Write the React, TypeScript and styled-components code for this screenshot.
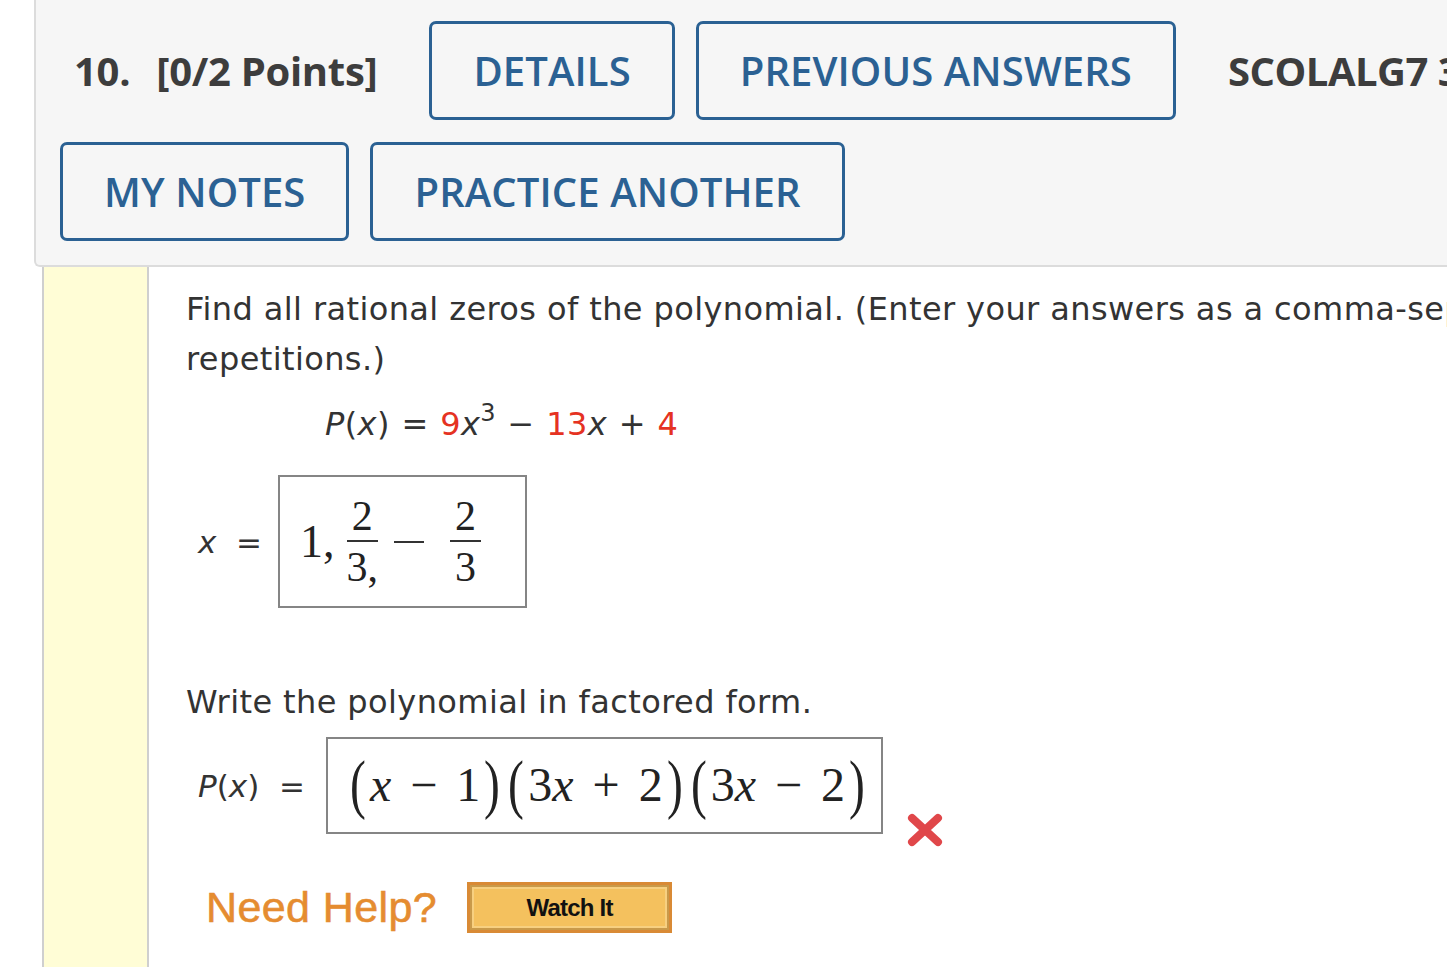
import styled, { createGlobalStyle } from "styled-components"

const GlobalStyle = createGlobalStyle`
  html, body {
    margin: 0;
    padding: 0;
    background: #fff;
  }
  body {
    width: 1447px;
    height: 967px;
    overflow: hidden;
  }
`

const Page = styled.div`
  width: 1447px;
  height: 967px;
  overflow: hidden;
  font-family: "DejaVu Sans", Verdana, sans-serif;
  color: #333;
`

const Header = styled.div`
  margin-left: 34px;
  width: 1500px;
  background: #f6f6f6;
  border-left: 2px solid #dcdcdc;
  border-bottom: 2px solid #dcdcdc;
  border-bottom-left-radius: 6px;
  padding: 21px 0 24px 24px;
  display: flex;
  flex-direction: column;
  gap: 22px;
  font-family: "Open Sans", sans-serif;
`

const HeaderRow = styled.div`
  display: flex;
  align-items: center;
  white-space: nowrap;
`

const Title = styled.div`
  font-size: 40px;
  font-weight: 700;
  color: #3d3d3d;
  letter-spacing: -0.3px;
  display: flex;
  gap: 26px;
  margin-left: 14px;
  margin-right: 52px;
`

const OutlineButton = styled.button<{ $gap?: number }>`
  height: 99px;
  box-sizing: border-box;
  padding: 0 41px;
  margin-right: ${p => p.$gap ?? 21}px;
  background: transparent;
  border: 3px solid #2b6193;
  border-radius: 7px;
  color: #2b6193;
  font-family: "Open Sans", sans-serif;
  font-weight: 600;
  font-size: 40px;
  letter-spacing: 0.1px;
`

const Code = styled.div`
  font-size: 40px;
  font-weight: 700;
  color: #3d3d3d;
  letter-spacing: -0.5px;
`

const Body = styled.div`
  display: flex;
  height: 700px;
`

const Gutter = styled.div`
  flex-shrink: 0;
  margin-left: 42px;
  width: 103px;
  background: #fffdd6;
  border-left: 2px solid #cfcfcf;
  border-right: 2px solid #cfcfcf;
`

const Content = styled.div`
  padding: 17px 0 0 37px;
  white-space: nowrap;
`

const Prompt = styled.p<{ $top?: number }>`
  margin: ${p => p.$top ?? 0}px 0 0;
  font-size: 32px;
  line-height: 50px;
  letter-spacing: 0.4px;
  color: #333;
`

const Formula = styled.div`
  margin: 20px 0 0 139px;
  font-size: 32px;
  line-height: 40px;
  letter-spacing: 0.4px;
  color: #333;
  word-spacing: 1px;
`

const Red = styled.span`
  color: #e53222;
`

const Sup = styled.sup`
  font-size: 24px;
  vertical-align: 14px;
  line-height: 0;
`

const AnswerRow = styled.div<{ $indent: number; $top: number }>`
  display: flex;
  align-items: center;
  margin: ${p => p.$top}px 0 0 ${p => p.$indent}px;
`

const Label = styled.span<{ $gap: number }>`
  font-size: 31px;
  color: #333;
  margin-right: ${p => p.$gap}px;
`

const MathBox = styled.div<{ $w: number; $h: number; $pad: number }>`
  box-sizing: border-box;
  width: ${p => p.$w}px;
  height: ${p => p.$h}px;
  border: 2px solid #858585;
  display: flex;
  align-items: center;
  padding-left: ${p => p.$pad}px;
  font-family: "Liberation Serif", "Times New Roman", serif;
  color: #222;
`

const MathText = styled.span<{ $size: number }>`
  font-size: ${p => p.$size}px;
  line-height: 1;
`

const Frac = styled.span<{ $gap: number }>`
  display: inline-flex;
  flex-direction: column;
  align-items: center;
  margin-left: ${p => p.$gap}px;
  font-size: 42px;
  line-height: 1;
`

const Num = styled.span`
  padding: 0 5px 3px;
  border-bottom: 2px solid #333;
`

const Den = styled.span`
  padding-top: 4px;
`

const Minus = styled.span`
  width: 30px;
  height: 2px;
  margin-left: 16px;
  background: #333;
`

const Paren = styled.span`
  display: inline-block;
  font-size: 66px;
  line-height: 1;
  transform: scaleX(0.72);
  margin: -4px 1px 0;
  vertical-align: -5px;
`

const Op = styled.span`
  margin: 0 19px;
`

const WrongMark = styled.span`
  align-self: flex-end;
  margin: 0 0 -13px 24px;
  display: flex;
`

const Help = styled.div`
  display: flex;
  align-items: center;
  margin: 48px 0 0 20px;
  gap: 30px;
`

const HelpText = styled.span`
  font-family: "Liberation Sans", Arial, sans-serif;
  font-size: 43px;
  letter-spacing: 0.4px;
  color: #e58c30;
  -webkit-text-stroke: 0.6px #e58c30;
`

const WatchButton = styled.button`
  box-sizing: border-box;
  width: 205px;
  height: 51px;
  background: #f4c15e;
  border: 3px solid #d98a35;
  box-shadow: inset 0 0 0 2px #c99a4a, inset 0 0 0 4px #f7d080;
  font-family: "Liberation Sans", Arial, sans-serif;
  font-weight: 700;
  font-size: 24px;
  color: #111;
  letter-spacing: -0.8px;
  padding: 0;
`

function Cross() {
  return (
    <svg width="36" height="34" viewBox="0 0 36 34">
      <path d="M5 5 L31 29 M31 5 L5 29" stroke="#e0474a" strokeWidth="8" strokeLinecap="round" />
    </svg>
  )
}

export default function App() {
  return (
    <Page>
      <GlobalStyle />
      <Header>
        <HeaderRow>
          <Title>
            <span>10.</span>
            <span>[0/2 Points]</span>
          </Title>
          <OutlineButton>DETAILS</OutlineButton>
          <OutlineButton $gap={52}>PREVIOUS ANSWERS</OutlineButton>
          <Code>SCOLALG7 3.4.041.</Code>
        </HeaderRow>
        <HeaderRow>
          <OutlineButton>MY NOTES</OutlineButton>
          <OutlineButton>PRACTICE ANOTHER</OutlineButton>
        </HeaderRow>
      </Header>
      <Body>
        <Gutter />
        <Content>
          <Prompt>
            Find all rational zeros of the polynomial. (Enter your answers as a comma-separated list. Enter all answers including
            <br />
            repetitions.)
          </Prompt>
          <Formula>
            <i>P</i>(<i>x</i>) = <Red>9</Red><i>x</i><Sup>3</Sup> − <Red>13</Red><i>x</i> + <Red>4</Red>
          </Formula>
          <AnswerRow $indent={12} $top={31}>
            <Label $gap={16}><i>x</i> &nbsp;=</Label>
            <MathBox $w={249} $h={133} $pad={20}>
              <MathText $size={46}>1,</MathText>
              <Frac $gap={12}>
                <Num>2</Num>
                <Den>3,</Den>
              </Frac>
              <Minus />
              <Frac $gap={26}>
                <Num>2</Num>
                <Den>3</Den>
              </Frac>
            </MathBox>
          </AnswerRow>
          <Prompt $top={69}>Write the polynomial in factored form.</Prompt>
          <AnswerRow $indent={12} $top={10}>
            <Label $gap={21}><i>P</i>(<i>x</i>) &nbsp;=</Label>
            <MathBox $w={557} $h={97} $pad={18}>
              <MathText $size={48}>
                <Paren>(</Paren><i>x</i><Op>−</Op>1<Paren>)</Paren>
                <Paren>(</Paren>3<i>x</i><Op>+</Op>2<Paren>)</Paren>
                <Paren>(</Paren>3<i>x</i><Op>−</Op>2<Paren>)</Paren>
              </MathText>
            </MathBox>
            <WrongMark><Cross /></WrongMark>
          </AnswerRow>
          <Help>
            <HelpText>Need Help?</HelpText>
            <WatchButton>Watch It</WatchButton>
          </Help>
        </Content>
      </Body>
    </Page>
  )
}
